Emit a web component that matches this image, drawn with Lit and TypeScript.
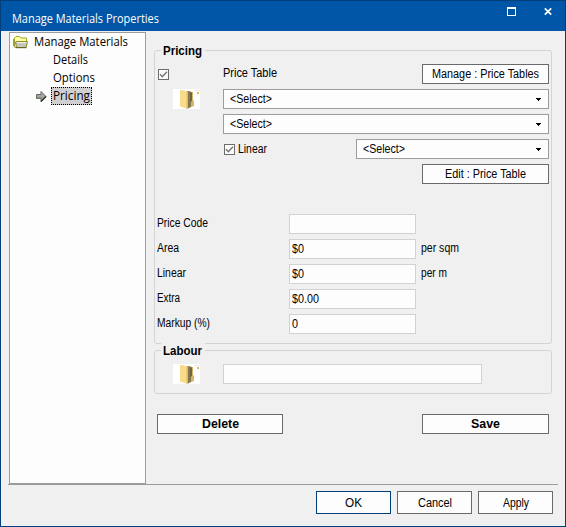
import { LitElement, html, css, svg } from "lit";
import { customElement, property } from "lit/decorators.js";

/** A line of text condensed or widened to the given pixel width. */
@customElement("fit-text")
class FitText extends LitElement {
  @property({ type: Number }) width = 0;
  @property() text = "";

  static styles = css`
    :host { display: block; flex: none; white-space: pre; line-height: 18px; height: 18px; }
    .run { display: inline-block; transform-origin: 0 50%; }
  `;

  updated() {
    const run = this.renderRoot.querySelector(".run") as HTMLElement;
    run.style.transform = "none";
    const natural = run.getBoundingClientRect().width;
    this.style.width = `${this.width}px`;
    if (natural) run.style.transform = `scaleX(${this.width / natural})`;
  }

  render() {
    return html`<span class="run">${this.text}</span>`;
  }
}

const t = (text: string, width: number) =>
  html`<fit-text .text=${text} .width=${width}></fit-text>`;

const check = svg`<svg width="9" height="9" viewBox="0 0 9 9"><path d="M1 4.3 L3.3 6.7 L8 1.7" fill="none" stroke="#777" stroke-width="1.5"/></svg>`;

const arrow = svg`<svg width="5" height="3" viewBox="0 0 5 3" shape-rendering="crispEdges"><path d="M0 0h5v1H4v1H3v1H2V2H1V1H0z" fill="#000"/></svg>`;

const folder = html`<svg width="27" height="20" viewBox="0 0 27 20">
  <rect width="27" height="20" fill="#fff"/>
  <path d="M18 3h2v8l1 1v5l-3 1z" fill="#d3b468"/>
  <path d="M14 2l4 .5v15.500l-3 1.500z" fill="#8a7747"/>
  <path d="M17 4l2-1v9l-2 1z" fill="#6f6444"/>
  <path d="M7 1l4 .3 4 1.700v17l-8-2.500z" fill="#f9dc8b"/>
  <path d="M13.500 2.500l1.500.5v17l-1.500-.5z" fill="#dfba62"/>
  <path d="M22 1h5v1h-5z" fill="#e8e8e8"/>
  <path d="M24 3h2v2h-2z" fill="#dfb954"/>
</svg>`;

const openFolder = html`<svg width="16" height="14" viewBox="0 0 16 14">
  <path d="M1.500 12V3L3 1.500H6.500L8 3h5.500V6" fill="#ffffa4" stroke="#a3a32c"/>
  <path d="M.7 4V11L3 13" fill="none" stroke="#8b8b1c"/>
  <path d="M3.500 6.500H14.500L13 12.500H3.500L2.500 7z" fill="#c6c6c0" stroke="#8b8b1c"/>
  <path d="M4 7.500H13.500" stroke="#f4f4e4"/>
  <path d="M3 12.700H13.500" stroke="#62621a"/>
</svg>`;

const pointer = html`<svg width="11" height="11" viewBox="0 0 11 11">
  <path d="M.5 3.500h4.500v-3L10 5.500 5 10.500v-3H.5z" fill="#a6a6a6" stroke="#666"/>
  <path d="M5 10.500L10 5.500" stroke="#22331c" stroke-width="1.300"/>
  <path d="M1 7h5" stroke="#6d8a5e"/>
</svg>`;

@customElement("app-root")
class AppRoot extends LitElement {
  static styles = css`
    * { box-sizing: border-box; }
    :host {
      display: flex; flex-direction: column; box-sizing: border-box;
      width: 566px; height: 527px;
      border: 1px solid #003f7c; background: #f0f0f0; color: #000;
      font: 12px "Liberation Sans", Arial, sans-serif;
    }
    svg { display: block; flex: none; }
    .titlebar {
      display: flex; align-items: flex-start; height: 30px; flex: none;
      background: #0055a6; color: #fff; padding: 0 13px 0 11px;
      font-family: "Open Sans", "Noto Sans", sans-serif;
    }
    .caption { margin: 9px auto 0 0; }
    .max { margin: 6px 28px 0 0; }
    .close { margin-top: 6px; }
    .body { display: flex; height: 453px; flex: none; padding: 1px 8px 0; }
    .tree {
      width: 137px; height: 452px; flex: none; background: #fdfdfd;
      border: 1px solid #9c9c9c; font-family: "Open Sans", "Noto Sans", sans-serif;
    }
    .node { display: flex; align-items: center; height: 18px; padding-left: 41px; }
    .node .name { padding: 0 2px; height: 18px; }
    .root { padding-left: 3px; }
    .root svg { margin-right: 3px; }
    .current { padding-left: 26px; }
    .current svg { margin-right: 4px; }
    .current .name { background: #d0d0d0; outline: 1px dotted #000; outline-offset: -1px; }
    .panel { padding: 18px 0 0 8px; width: 406px; flex: none; }
    .group {
      position: relative; border: 1px solid #d4d4d4; border-radius: 3px;
      width: 398px; padding: 13px 2px 0;
    }
    .pricing { height: 294px; }
    .labour { height: 44px; margin-top: 6px; }
    .legend {
      position: absolute; left: 6px; top: -9px; padding: 0 3px 0 2px;
      background: #f0f0f0; font-weight: bold;
    }
    .row { display: flex; height: 20px; margin-bottom: 5px; }
    .tick {
      width: 11px; height: 11px; flex: none; background: #fdfdfd;
      border: 1px solid #6c6c6c;
    }
    .lead { width: 66px; flex: none; }
    .lead .tick { margin: 5px 0 0 1px; }
    .pic { padding-left: 16px; }
    .combo {
      display: flex; align-items: center; justify-content: space-between;
      height: 20px; flex: 1; background: #fdfdfd; border: 1px solid #9c9c9c;
      padding: 0 7px 0 6px;
    }
    .btn {
      display: flex; align-items: center; justify-content: center; height: 20px;
      width: 127px; flex: none; background: #fdfdfd; border: 1px solid #6a6a6a;
    }
    .push { margin-left: auto; }
    .sub { display: flex; width: 133px; padding-left: 1px; }
    .sub .tick { margin: 5px 3px 0 0; }
    .sub fit-text { margin-top: 1px; }
    .fields { margin-top: 30px; }
    .field-label { width: 132px; flex: none; }
    .input {
      display: flex; align-items: center; width: 127px; height: 20px; flex: none;
      background: #fdfdfd; border: 1px solid #d2d2d2; padding-left: 2px; margin-right: 5px;
    }
    .input.long { width: 259px; }
    .actions {
      display: flex; justify-content: space-between; width: 392px;
      margin: 20px 0 0 3px; font-weight: bold;
    }
    .actions .first { width: 126px; }
    .footer {
      display: flex; justify-content: flex-end; gap: 6px; margin: 0 7px;
      border-top: 1px solid #9c9c9c; padding: 6px 5px 0 0; flex: none;
    }
    .footer .btn { width: 75px; height: 23px; }
    .footer .default { border-color: #003f7c; }
  `;

  private combo() {
    return html`<div class="combo">${t("<Select>", 42)}${arrow}</div>`;
  }

  private field(label: string, lw: number, value = "", vw = 0, unit = "", uw = 0) {
    return html`<div class="row">
      <div class="field-label">${t(label, lw)}</div>
      <div class="input">${value ? t(value, vw) : ""}</div>
      ${unit ? t(unit, uw) : ""}
    </div>`;
  }

  render() {
    return html`
      <div class="titlebar">
        <div class="caption">${t("Manage Materials Properties", 147)}</div>
        <svg class="max" width="9" height="9" viewBox="0 0 9 9" shape-rendering="crispEdges">
          <path d="M0 0h9v9H0zM1 2v6h7V2z" fill="#fff" fill-rule="evenodd"/>
        </svg>
        <svg class="close" width="8" height="9" viewBox="0 0 8 9">
          <path d="M.8 1.300L7.200 7.700M7.200 1.300L.8 7.700" stroke="#fff" stroke-width="1.700"/>
        </svg>
      </div>
      <div class="body">
        <div class="tree">
          <div class="node root">${openFolder}<div class="name">${t("Manage Materials", 94)}</div></div>
          <div class="node"><div class="name">${t("Details", 35)}</div></div>
          <div class="node"><div class="name">${t("Options", 42)}</div></div>
          <div class="node current">${pointer}<div class="name">${t("Pricing", 37)}</div></div>
        </div>
        <div class="panel">
          <div class="group pricing">
            <div class="legend">${t("Pricing", 39)}</div>
            <div class="row">
              <div class="lead"><div class="tick">${check}</div></div>
              ${t("Price Table", 54)}
              <div class="btn push">${t("Manage : Price Tables", 107)}</div>
            </div>
            <div class="row"><div class="lead pic">${folder}</div>${this.combo()}</div>
            <div class="row"><div class="lead"></div>${this.combo()}</div>
            <div class="row">
              <div class="lead"></div>
              <div class="sub"><div class="tick">${check}</div>${t("Linear", 29)}</div>
              ${this.combo()}
            </div>
            <div class="row"><div class="btn push">${t("Edit : Price Table", 81)}</div></div>
            <div class="fields">
              ${this.field("Price Code", 51)}
              ${this.field("Area", 22, "$0", 12, "per sqm", 38)}
              ${this.field("Linear", 29, "$0", 12, "per m", 26)}
              ${this.field("Extra", 23, "$0.00", 27)}
              ${this.field("Markup (%)", 53, "0", 6)}
            </div>
          </div>
          <div class="group labour">
            <div class="legend">${t("Labour", 39)}</div>
            <div class="row">
              <div class="lead pic">${folder}</div>
              <div class="input long"></div>
            </div>
          </div>
          <div class="actions">
            <div class="btn first">${t("Delete", 37)}</div>
            <div class="btn">${t("Save", 29)}</div>
          </div>
        </div>
      </div>
      <div class="footer">
        <div class="btn default">${t("OK", 17)}</div>
        <div class="btn">${t("Cancel", 34)}</div>
        <div class="btn">${t("Apply", 26)}</div>
      </div>
    `;
  }
}
